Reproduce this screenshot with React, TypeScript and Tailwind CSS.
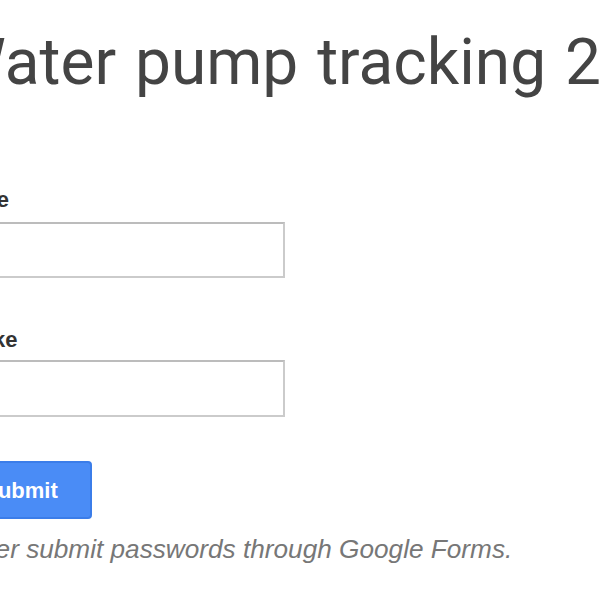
export default function App() {
  return (
    <div className="h-[600px] w-[600px] overflow-hidden bg-white">
      <div className="ml-[-51px] pt-[31px]">
        <h1
          className="whitespace-nowrap text-[64px] leading-[64px] text-[#444444] [word-spacing:3px]"
          style={{ fontFamily: "Roboto, 'Liberation Sans', sans-serif" }}
        >
          Water pump tracking 2016
        </h1>

        <form className="flex flex-col font-['Liberation_Sans',Arial,sans-serif]">
          <label className="mt-[94px] block whitespace-nowrap text-[22px] font-bold leading-[22px] text-[#333333]">
            Name
          </label>
          <input
            type="text"
            className="mt-[11px] h-[56px] w-[336px] border-2 border-[#cbcbcb] border-t-[#bcbcbc] bg-white"
          />

          <label className="mt-[51px] block whitespace-nowrap text-[22px] font-bold leading-[22px] text-[#333333]">
            Stroke
          </label>
          <input
            type="text"
            className="mt-[9px] h-[57px] w-[336px] border-2 border-[#cbcbcb] border-t-[#bcbcbc] bg-white"
          />

          <div className="mt-[44px]">
            <button
              type="button"
              className="h-[58px] w-[143px] rounded-[4px] border-2 border-[#3b7de9] bg-[#4a8cf6] text-[22px] font-bold text-white"
            >
              Submit
            </button>
          </div>

          <p className="mt-[17px] whitespace-nowrap text-[26.2px] italic leading-[26px] text-[#777777]">
            Never submit passwords through Google Forms.
          </p>
        </form>
      </div>
    </div>
  );
}
